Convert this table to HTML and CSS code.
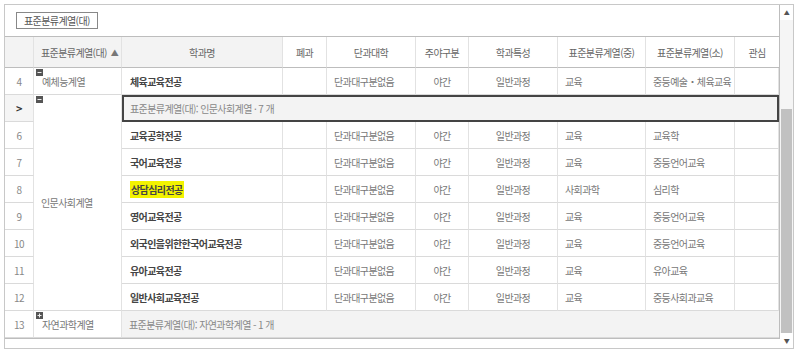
FILE: index.html
```html
<!DOCTYPE html>
<html lang="ko">
<head>
<meta charset="utf-8">
<link rel="stylesheet" href="styles.css">
</head>
<body>
<div class="grid">
  <div class="viewport">
    <div class="group-panel">
      <span class="group-chip">표준분류계열(대)</span>
    </div>
    <div class="cols head">
      <div class="h h-gray"></div>
      <div class="h h-gray h-sort">표준분류계열(대) <span class="arrow">▲</span></div>
      <div class="h h-gray">학과명</div>
      <div class="h">폐과</div>
      <div class="h">단과대학</div>
      <div class="h">주야구분</div>
      <div class="h">학과특성</div>
      <div class="h">표준분류계열(중)</div>
      <div class="h">표준분류계열(소)</div>
      <div class="h">관심</div>
    </div>
    <div class="cols body">
      <!-- row 4 -->
      <div class="c num">4</div>
      <div class="c grp"><svg class="tog" viewBox="0 0 7 7"><rect width="7" height="7" fill="#555"/><rect x="1.5" y="3" width="4" height="1" fill="#eee"/></svg>예체능계열</div>
      <div class="c name">체육교육전공</div>
      <div class="c"></div>
      <div class="c">단과대구분없음</div>
      <div class="c ctr">야간</div>
      <div class="c ctr">일반과정</div>
      <div class="c">교육</div>
      <div class="c">중등예술・체육교육</div>
      <div class="c"></div>
      <!-- row 5 group -->
      <div class="c num sel">&gt;</div>
      <div class="c grp merged"><svg class="tog" viewBox="0 0 7 7"><rect width="7" height="7" fill="#555"/><rect x="1.5" y="3" width="4" height="1" fill="#eee"/></svg><span class="merged-label">인문사회계열</span></div>
      <div class="c summary active">표준분류계열(대): 인문사회계열 · 7 개</div>
      <!-- row 6 -->
      <div class="c num">6</div>
      <div class="c name">교육공학전공</div>
      <div class="c"></div>
      <div class="c">단과대구분없음</div>
      <div class="c ctr">야간</div>
      <div class="c ctr">일반과정</div>
      <div class="c">교육</div>
      <div class="c">교육학</div>
      <div class="c"></div>
      <!-- row 7 -->
      <div class="c num">7</div>
      <div class="c name">국어교육전공</div>
      <div class="c"></div>
      <div class="c">단과대구분없음</div>
      <div class="c ctr">야간</div>
      <div class="c ctr">일반과정</div>
      <div class="c">교육</div>
      <div class="c">중등언어교육</div>
      <div class="c"></div>
      <!-- row 8 -->
      <div class="c num">8</div>
      <div class="c name"><span class="hl">상담심리전공</span></div>
      <div class="c"></div>
      <div class="c">단과대구분없음</div>
      <div class="c ctr">야간</div>
      <div class="c ctr">일반과정</div>
      <div class="c">사회과학</div>
      <div class="c">심리학</div>
      <div class="c"></div>
      <!-- row 9 -->
      <div class="c num">9</div>
      <div class="c name">영어교육전공</div>
      <div class="c"></div>
      <div class="c">단과대구분없음</div>
      <div class="c ctr">야간</div>
      <div class="c ctr">일반과정</div>
      <div class="c">교육</div>
      <div class="c">중등언어교육</div>
      <div class="c"></div>
      <!-- row 10 -->
      <div class="c num">10</div>
      <div class="c name">외국인을위한한국어교육전공</div>
      <div class="c"></div>
      <div class="c">단과대구분없음</div>
      <div class="c ctr">야간</div>
      <div class="c ctr">일반과정</div>
      <div class="c">교육</div>
      <div class="c">중등언어교육</div>
      <div class="c"></div>
      <!-- row 11 -->
      <div class="c num">11</div>
      <div class="c name">유아교육전공</div>
      <div class="c"></div>
      <div class="c">단과대구분없음</div>
      <div class="c ctr">야간</div>
      <div class="c ctr">일반과정</div>
      <div class="c">교육</div>
      <div class="c">유아교육</div>
      <div class="c"></div>
      <!-- row 12 -->
      <div class="c num">12</div>
      <div class="c name">일반사회교육전공</div>
      <div class="c"></div>
      <div class="c">단과대구분없음</div>
      <div class="c ctr">야간</div>
      <div class="c ctr">일반과정</div>
      <div class="c">교육</div>
      <div class="c">중등사회과교육</div>
      <div class="c"></div>
      <!-- row 13 group -->
      <div class="c num">13</div>
      <div class="c grp"><svg class="tog" viewBox="0 0 7 7"><rect width="7" height="7" fill="#555"/><rect x="1.5" y="3" width="4" height="1" fill="#eee"/><rect x="3" y="1.5" width="1" height="4" fill="#eee"/></svg>자연과학계열</div>
      <div class="c summary">표준분류계열(대): 자연과학계열 - 1 개</div>
    </div>
  </div>
  <div class="vscroll">
    <div class="sb-arrow">▲</div>
    <div class="sb-track"><div class="sb-thumb"></div></div>
    <div class="sb-arrow">▼</div>
  </div>
</div>
</body>
</html>
```

FILE: styles.css
```css
* { box-sizing: border-box; }
html, body { margin: 0; padding: 0; background: #fff; }
body {
  padding: 4px;
  font-family: "Noto Sans CJK KR", "Noto Sans", sans-serif;
  font-size: 10px;
  letter-spacing: -0.6px;
  color: #777;
}
.grid {
  display: flex;
  width: 790px;
  height: 345px;
  border: 1px solid #c8c8c8;
}
.viewport {
  width: 775px;
  height: 334px;
  border-right: 1px solid #bdbdbd;
  border-bottom: 1px solid #bdbdbd;
  overflow: hidden;
}
.group-panel {
  height: 32px;
  border-bottom: 1px solid #bdbdbd;
  display: flex;
  align-items: center;
  padding-left: 11px;
}
.group-chip {
  border: 1px solid #888;
  background: #fff;
  height: 17px;
  line-height: 15px;
  padding: 0 7px;
  color: #555;
  box-shadow: inset 0 0 0 1px #fff;
}
.cols {
  display: grid;
  grid-template-columns: 29px 88px 161px 44px 89px 53px 89px 88px 89px 44px;
}
.head { grid-auto-rows: 31px; }
.body { grid-auto-rows: 27px; }
.h {
  border-right: 1px solid #e2e2e2;
  border-bottom: 1px solid #bdbdbd;
  display: flex;
  align-items: center;
  justify-content: center;
  color: #666;
  background: #fff;
}
.h:last-child { border-right: none; }
.h-gray { background: #f3f3f3; }
.h-sort { justify-content: flex-start; padding-left: 7px; }
.arrow { font-size: 8px; margin-left: 4px; color: #777; }
.c {
  border-right: 1px solid #e2e2e2;
  border-bottom: 1px solid #dadada;
  display: flex;
  align-items: center;
  padding-left: 7px;
  white-space: nowrap;
  overflow: hidden;
}
.num {
  justify-content: center;
  padding-left: 0;
  color: #888;
  background: #fff;
}
.sel { color: #333; font-weight: bold; font-size: 11px; background: #f5f5f5; }
.grp {
  position: relative;
  padding-left: 8px;
  color: #777;
}
.tog {
  position: absolute;
  left: 2px;
  top: 1px;
  width: 7px;
  height: 7px;
}
.merged {
  grid-row: span 8;
  padding-left: 7px;
}
.name { font-weight: bold; color: #444; padding-left: 8px; }
.ctr { justify-content: center; padding-left: 0; }
.summary {
  grid-column: span 8;
  background: #f3f3f3;
  color: #888;
  border-right: none;
}
.active {
  border: 2px solid #444;
  padding-left: 6px;
}
.hl { background: #f3f300; color: #444; padding: 1px 1px; }
.vscroll {
  width: 13px;
  height: 343px;
  display: flex;
  flex-direction: column;
  background: #fff;
}
.sb-arrow {
  height: 15px;
  font-size: 6px;
  color: #555;
  display: flex;
  align-items: center;
  justify-content: center;
}
.sb-track {
  flex: 1;
  background: #f5f5f5;
  padding: 89px 1px 0 1px;
}
.sb-thumb {
  height: 224px;
  background: #c1c1c1;
}
```
